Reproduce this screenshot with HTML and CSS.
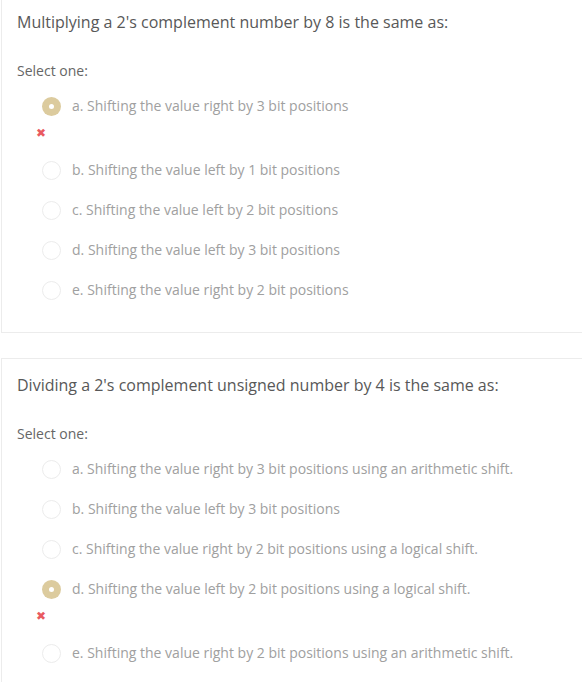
FILE: index.html
```html
<!DOCTYPE html>
<html>
<head>
<meta charset="utf-8">
<link rel="stylesheet" href="styles.css">
</head>
<body>
<div class="page">
  <div class="que">
    <div class="qtext">Multiplying a 2's complement number by 8 is the same as:</div>
    <div class="prompt">Select one:</div>
    <div class="answers">
      <div class="opt">
        <span class="radio checked"></span>
        <span class="lbl">a. Shifting the value right by 3 bit positions</span>
      </div>
      <div class="fb"><span class="xmark">&#x2716;</span></div>
      <div class="opt">
        <span class="radio"></span>
        <span class="lbl">b. Shifting the value left by 1 bit positions</span>
      </div>
      <div class="opt">
        <span class="radio"></span>
        <span class="lbl">c. Shifting the value left by 2 bit positions</span>
      </div>
      <div class="opt">
        <span class="radio"></span>
        <span class="lbl">d. Shifting the value left by 3 bit positions</span>
      </div>
      <div class="opt">
        <span class="radio"></span>
        <span class="lbl">e. Shifting the value right by 2 bit positions</span>
      </div>
    </div>
  </div>
  <div class="que">
    <div class="qtext">Dividing a 2's complement unsigned number by 4 is the same as:</div>
    <div class="prompt">Select one:</div>
    <div class="answers">
      <div class="opt">
        <span class="radio"></span>
        <span class="lbl">a. Shifting the value right by 3 bit positions using an arithmetic shift.</span>
      </div>
      <div class="opt">
        <span class="radio"></span>
        <span class="lbl">b. Shifting the value left by 3 bit positions</span>
      </div>
      <div class="opt">
        <span class="radio"></span>
        <span class="lbl">c. Shifting the value right by 2 bit positions using a logical shift.</span>
      </div>
      <div class="opt">
        <span class="radio checked"></span>
        <span class="lbl">d. Shifting the value left by 2 bit positions using a logical shift.</span>
      </div>
      <div class="fb"><span class="xmark">&#x2716;</span></div>
      <div class="opt">
        <span class="radio"></span>
        <span class="lbl">e. Shifting the value right by 2 bit positions using an arithmetic shift.</span>
      </div>
    </div>
  </div>
</div>
</body>
</html>
```
FILE: styles.css
```css
html, body {
  margin: 0;
  padding: 0;
  background: #ffffff;
  overflow: hidden;
}
body {
  font-family: "Open Sans", "Liberation Sans", sans-serif;
}
.page {
  margin-top: -5px;
  margin-left: 1px;
  width: 640px;
  display: flex;
  flex-direction: column;
  gap: 25px;
}
.que {
  border: 1px solid #ececec;
  padding: 14px 15px 22px 15px;
}
.qtext {
  font-size: 16px;
  line-height: 24px;
  color: #585858;
}
.prompt {
  margin-top: 27px;
  font-size: 14px;
  line-height: 20px;
  color: #666666;
}
.answers {
  margin-top: 5px;
  display: flex;
  flex-direction: column;
}
.opt {
  display: flex;
  align-items: center;
  height: 40px;
  padding-left: 25px;
}
.radio {
  width: 19px;
  height: 19px;
  box-sizing: border-box;
  border-radius: 50%;
  border: 1px solid #ececec;
  background: #ffffff;
  margin-right: 11px;
  flex: none;
  display: flex;
  align-items: center;
  justify-content: center;
}
.radio.checked {
  border: none;
  background: #dccb9e;
}
.radio.checked::after {
  content: "";
  width: 5px;
  height: 5px;
  border-radius: 50%;
  background: #ffffff;
}
.lbl {
  font-size: 14px;
  line-height: 20px;
  color: #a0a0a0;
}
.fb {
  height: 23px;
  padding-left: 19px;
  padding-top: 1px;
}
.xmark {
  display: block;
  font-family: "DejaVu Sans", sans-serif;
  font-size: 12px;
  line-height: 12px;
  color: #e95a60;
}
```
